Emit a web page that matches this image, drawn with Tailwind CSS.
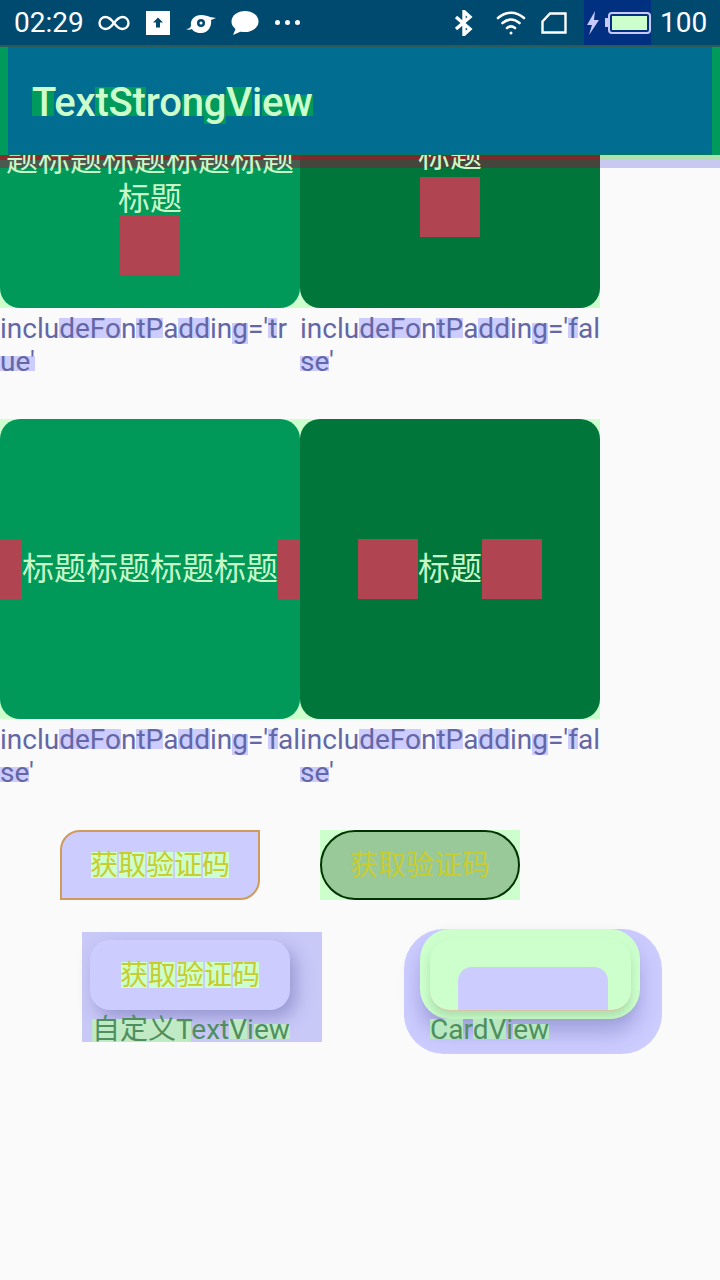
<!DOCTYPE html>
<html>
<head>
<meta charset="utf-8">
<script src="https://cdn.jsdelivr.net/npm/@tailwindcss/browser@4"></script>
</head>
<body class="bg-[#fafafa]">
<div class="relative w-[720px] h-[1280px] overflow-hidden bg-[#fafafa] font-['Roboto','Noto_Sans_CJK_SC',sans-serif]">

  <header class="relative z-10">
    <div class="h-[45px] bg-[#004a70] flex items-center text-white">
      <span class="ml-[14px] w-[68px] text-[28px] leading-[45px] whitespace-nowrap">02:29</span>
      <svg class="ml-[16px]" width="32" height="20" viewBox="0 0 32 20" fill="none" stroke="#fff" stroke-width="2.4"><path d="M16 10c-3-4-5.500-6-8.500-6a6 6 0 0 0 0 12c3 0 5.500-2 8.500-6c3-4 5.500-6 8.500-6a6 6 0 0 1 0 12c-3 0-5.500-2-8.500-6z"/></svg>
      <svg class="ml-[16px]" width="24" height="24" viewBox="0 0 24 24"><rect width="24" height="24" fill="#fff"/><path d="M12 6.500l5 5h-3v5h-4v-5h-3z" fill="#004a70"/></svg>
      <svg class="ml-[16px]" width="30" height="22" viewBox="0 0 30 22"><path d="M0 17c3 0 4-1 5-3c-1-7 4-11 10-11c4 0 7 1 9 2l6 1l-5 2c1 5-2 13-10 13c-5 0-8-2-9-4c-2 1-4 1-6 0z" fill="#fff"/><circle cx="15" cy="11" r="4" fill="#004a70"/><circle cx="15" cy="11" r="1.500" fill="#fff"/></svg>
      <svg class="ml-[15px]" width="28" height="26" viewBox="0 0 28 26"><ellipse cx="14" cy="11.500" rx="13.500" ry="10.500" fill="#fff"/><path d="M5 18l-3 7l9-4z" fill="#fff"/></svg>
      <span class="ml-[16px] flex gap-[5px]"><i class="block w-[5px] h-[5px] rounded-full bg-white"></i><i class="block w-[5px] h-[5px] rounded-full bg-white"></i><i class="block w-[5px] h-[5px] rounded-full bg-white"></i></span>
      <svg class="ml-[154px]" width="20" height="26" viewBox="0 0 20 26" fill="none" stroke="#fff" stroke-width="3.4"><path d="M2 7l14 12l-6 5.500v-23l6 5.500l-14 12"/></svg>
      <svg class="ml-[22px]" width="30" height="26" viewBox="0 0 30 26" fill="none" stroke="#fff" stroke-width="2.600" stroke-linecap="round"><path d="M2 8c8-7 18-7 26 0"/><path d="M6.500 13c5.500-4.500 11.500-4.500 17 0"/><path d="M11 18c2.500-2 5.500-2 8 0"/><circle cx="15" cy="23" r="1.500" fill="#fff" stroke="none"/></svg>
      <svg class="ml-[15px]" width="26" height="22" viewBox="0 0 26 22" fill="none" stroke="#fff" stroke-width="2.400"><path d="M9 1.500h15.500v19h-23v-11z"/></svg>
      <div class="ml-[17px] w-[67px] h-[45px] bg-[#00307f] flex items-center">
        <svg class="ml-[3px]" width="12" height="24" viewBox="0 0 12 24"><path d="M8 0L0 14h5l-3 10l10-15H7z" fill="#c8c8ff"/></svg>
        <div class="ml-[6px] w-[3px] h-[9px] bg-[#c8c8ff]"></div>
        <div class="w-[43px] h-[22px] rounded-[4px] border-[2.5px] border-[#c8c8ff] p-[2px]"><div class="w-full h-full bg-[#ccffcc]"></div></div>
      </div>
      <span class="ml-[9px] text-[28px] leading-[45px]">100</span>
    </div>
    <div class="h-[2px] bg-[#2e5a55]"></div>
    <div class="h-[108px] px-[8px] bg-[#009a5c] flex">
      <div class="flex-1 bg-[#006d91] border-t border-b border-[#00775f] flex items-center pl-[24px] pt-[2px]">
        <span class="text-[40px] leading-[47px] tracking-[-0.2px] font-medium text-[#ccffcc] whitespace-nowrap"><span class="bg-[linear-gradient(transparent_8px,#009a5c_8px,#009a5c_37px,transparent_37px)]">T</span>ex<span class="bg-[linear-gradient(transparent_8px,#009a5c_8px,#009a5c_37px,transparent_37px)]">tSt</span>ro<span class="bg-[linear-gradient(transparent_16px,#009a5c_16px,#009a5c_37px,transparent_37px)]">n</span><span class="bg-[linear-gradient(transparent_16px,#009a5c_16px,#009a5c_45px,transparent_45px)]">g</span><span class="bg-[linear-gradient(transparent_8px,#009a5c_8px,#009a5c_37px,transparent_37px)]">V</span>i<span class="bg-[linear-gradient(transparent_16px,#009a5c_16px,#009a5c_37px,transparent_37px)]">ew</span></span>
      </div>
    </div>
    <div class="absolute left-[600px] right-0 top-full h-[13px] flex flex-col">
      <div class="h-[5px] bg-[#b0e0b0]"></div>
      <div class="h-[8px] bg-[#c8c8f0]"></div>
    </div>
  </header>

  <main class="-mt-[147px]">
    <section class="w-[600px] grid grid-cols-2">
      <div>
        <div class="h-[300px] bg-[#ccffcc]">
          <div class="h-full rounded-[20px] bg-[linear-gradient(#00995a_147px,#8a2a2a_147px,#8a2a2a_152px,#4b5a50_152px,#4b5a50_160px,#00995a_160px)] flex flex-col items-center justify-end pb-[33px] text-[#c8f8c8]">
            <div class="w-[288px] text-center break-all text-[32px] leading-[39px]">标题标题标题标题标题标题标题标题标题标题标题标题标题标题标题标题标题标题标题</div>
            <div class="w-[60px] h-[60px] bg-[#b04450] -mt-[4px]"></div>
          </div>
        </div>
        <p class="pt-[4px] text-[28px] leading-[33px] text-[#6367a5] break-all">inclu<span class="bg-[linear-gradient(transparent_6px,#ccf_6px,#ccf_26px,transparent_26px)]">deFo</span>n<span class="bg-[linear-gradient(transparent_6px,#ccf_6px,#ccf_26px,transparent_26px)]">tP</span>a<span class="bg-[linear-gradient(transparent_6px,#ccf_6px,#ccf_26px,transparent_26px)]">dd</span>in<span class="bg-[linear-gradient(transparent_11px,#ccf_11px,#ccf_32px,transparent_32px)]">g</span>='<span class="bg-[linear-gradient(transparent_6px,#ccf_6px,#ccf_26px,transparent_26px)]">t</span>r<span class="bg-[linear-gradient(transparent_11px,#ccf_11px,#ccf_26px,transparent_26px)]">ue'</span></p>
      </div>
      <div>
        <div class="h-[300px] bg-[#ccffcc]">
          <div class="h-full rounded-[20px] bg-[linear-gradient(#00763a_147px,#7e2a2a_147px,#7e2a2a_152px,#45453c_152px,#45453c_160px,#00763a_160px)] flex flex-col items-center justify-end pb-[71px] text-[#c8f8c8]">
            <div class="text-[32px] leading-[30px]">标题</div>
            <div class="w-[60px] h-[60px] bg-[#b04450] mt-[6px]"></div>
          </div>
        </div>
        <p class="pt-[4px] text-[28px] leading-[33px] text-[#6367a5] break-all">inclu<span class="bg-[linear-gradient(transparent_6px,#ccf_6px,#ccf_26px,transparent_26px)]">deFo</span>n<span class="bg-[linear-gradient(transparent_6px,#ccf_6px,#ccf_26px,transparent_26px)]">tP</span>a<span class="bg-[linear-gradient(transparent_6px,#ccf_6px,#ccf_26px,transparent_26px)]">dd</span>in<span class="bg-[linear-gradient(transparent_11px,#ccf_11px,#ccf_32px,transparent_32px)]">g</span>='<span class="bg-[linear-gradient(transparent_6px,#ccf_6px,#ccf_26px,transparent_26px)]">f</span>al<span class="bg-[linear-gradient(transparent_11px,#ccf_11px,#ccf_26px,transparent_26px)]">se</span>'</p>
      </div>
    </section>

    <section class="mt-[41px] w-[600px] grid grid-cols-2">
      <div>
        <div class="h-[300px] bg-[#ccffcc]">
          <div class="h-full rounded-[20px] bg-[#00995a] flex items-center text-[#c8f8c8]">
            <div class="w-[60px] h-[60px] bg-[#b04450]"></div>
            <div class="shrink-0 whitespace-nowrap text-[32px] leading-[37px]">标题标题标题标题</div>
            <div class="w-[60px] h-[60px] bg-[#b04450]"></div>
          </div>
        </div>
        <p class="pt-[4px] text-[28px] leading-[33px] text-[#6367a5] break-all">inclu<span class="bg-[linear-gradient(transparent_6px,#ccf_6px,#ccf_26px,transparent_26px)]">deFo</span>n<span class="bg-[linear-gradient(transparent_6px,#ccf_6px,#ccf_26px,transparent_26px)]">tP</span>a<span class="bg-[linear-gradient(transparent_6px,#ccf_6px,#ccf_26px,transparent_26px)]">dd</span>in<span class="bg-[linear-gradient(transparent_11px,#ccf_11px,#ccf_32px,transparent_32px)]">g</span>='<span class="bg-[linear-gradient(transparent_6px,#ccf_6px,#ccf_26px,transparent_26px)]">f</span>al<span class="bg-[linear-gradient(transparent_11px,#ccf_11px,#ccf_26px,transparent_26px)]">se</span>'</p>
      </div>
      <div>
        <div class="h-[300px] bg-[#ccffcc]">
          <div class="h-full rounded-[20px] bg-[#00763a] flex items-center justify-center text-[#c8f8c8]">
            <div class="w-[60px] h-[60px] bg-[#b04450]"></div>
            <div class="shrink-0 whitespace-nowrap text-[32px] leading-[37px]">标题</div>
            <div class="w-[60px] h-[60px] bg-[#b04450]"></div>
          </div>
        </div>
        <p class="pt-[4px] text-[28px] leading-[33px] text-[#6367a5] break-all">inclu<span class="bg-[linear-gradient(transparent_6px,#ccf_6px,#ccf_26px,transparent_26px)]">deFo</span>n<span class="bg-[linear-gradient(transparent_6px,#ccf_6px,#ccf_26px,transparent_26px)]">tP</span>a<span class="bg-[linear-gradient(transparent_6px,#ccf_6px,#ccf_26px,transparent_26px)]">dd</span>in<span class="bg-[linear-gradient(transparent_11px,#ccf_11px,#ccf_32px,transparent_32px)]">g</span>='<span class="bg-[linear-gradient(transparent_6px,#ccf_6px,#ccf_26px,transparent_26px)]">f</span>al<span class="bg-[linear-gradient(transparent_11px,#ccf_11px,#ccf_26px,transparent_26px)]">se</span>'</p>
      </div>
    </section>

    <section class="mt-[41px] pl-[60px] flex gap-[60px]">
      <div class="w-[200px] h-[70px] bg-[#ccccff] border-2 border-[#d09a5a] rounded-tl-[20px] rounded-br-[20px] flex items-center justify-center gap-[2px] text-[28px] text-[#c8cc30]">
        <span class="w-[26px] h-[26px] leading-[28px] bg-[#ccffcc] flex justify-center whitespace-nowrap">获</span><span class="w-[26px] h-[26px] leading-[28px] bg-[#ccffcc] flex justify-center whitespace-nowrap">取</span><span class="w-[26px] h-[26px] leading-[28px] bg-[#ccffcc] flex justify-center whitespace-nowrap">验</span><span class="w-[26px] h-[26px] leading-[28px] bg-[#ccffcc] flex justify-center whitespace-nowrap">证</span><span class="w-[26px] h-[26px] leading-[28px] bg-[#ccffcc] flex justify-center whitespace-nowrap">码</span>
      </div>
      <div class="w-[200px] h-[70px] bg-[#ccffcc]">
        <div class="h-full rounded-full bg-[#99c999] border-2 border-[#003300] flex items-center justify-center pt-[2px] text-[28px] leading-[26px] text-[#c8cc30]">获取验证码</div>
      </div>
    </section>

    <section class="mt-[32px] flex items-start">
      <div class="ml-[82px] w-[240px] h-[110px] bg-[#c9c9f8] pt-[8px] pl-[8px]">
        <div class="w-[200px] h-[70px] bg-[#ccccff] rounded-[20px] shadow-[6px_8px_18px_rgba(70,70,150,0.38)] flex items-center justify-center gap-[2px] text-[28px] text-[#c8cc30]">
          <span class="w-[26px] h-[26px] leading-[28px] bg-[#ccffcc] flex justify-center whitespace-nowrap">获</span><span class="w-[26px] h-[26px] leading-[28px] bg-[#ccffcc] flex justify-center whitespace-nowrap">取</span><span class="w-[26px] h-[26px] leading-[28px] bg-[#ccffcc] flex justify-center whitespace-nowrap">验</span><span class="w-[26px] h-[26px] leading-[28px] bg-[#ccffcc] flex justify-center whitespace-nowrap">证</span><span class="w-[26px] h-[26px] leading-[28px] bg-[#ccffcc] flex justify-center whitespace-nowrap">码</span>
        </div>
        <p class="pl-[2px] pt-[7px] text-[28px] leading-[26px] text-[#4f8f5f] whitespace-nowrap"><span class="bg-[linear-gradient(transparent_6px,#bfeac4_6px,#bfeac4_29px,transparent_29px)]">自定义T</span>ext<span class="bg-[linear-gradient(transparent_6px,#bfeac4_6px,#bfeac4_26px,transparent_26px)]">V</span>i<span class="bg-[linear-gradient(transparent_11px,#bfeac4_11px,#bfeac4_26px,transparent_26px)]">ew</span></p>
      </div>
      <div class="ml-[82px] -mt-[3px] w-[258px] h-[125px] rounded-[40px] bg-[#ccccff] pl-[16px]">
        <div class="w-[220px] h-[90px] rounded-[30px] bg-[#ccffcc] pt-[11px] pl-[10px] shadow-[0_14px_20px_rgba(70,70,150,0.3)]">
          <div class="w-[201px] h-[71px] rounded-[20px] bg-[#ccffcc] border-b border-[#d8c8a8] shadow-[0_6px_10px_rgba(60,110,60,0.22)] flex items-end pl-[28px]">
            <div class="w-[150px] h-[43px] bg-[#ccccff] rounded-t-[14px]"></div>
          </div>
        </div>
        <p class="pl-[10px] -mt-[5px] text-[28px] leading-[32px] text-[#4f8f5f]"><span class="bg-[linear-gradient(transparent_6px,#b8e8c0_6px,#b8e8c0_26px,transparent_26px)]">Ca</span>r<span class="bg-[linear-gradient(transparent_6px,#b8e8c0_6px,#b8e8c0_26px,transparent_26px)]">dV</span>i<span class="bg-[linear-gradient(transparent_11px,#b8e8c0_11px,#b8e8c0_26px,transparent_26px)]">ew</span></p>
      </div>
    </section>
  </main>
</div>
</body>
</html>
